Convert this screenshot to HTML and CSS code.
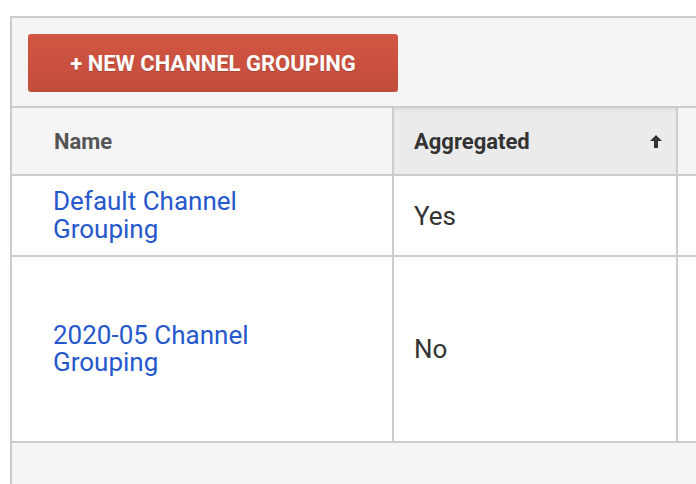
FILE: index.html
```html
<!DOCTYPE html>
<html>
<head>
<meta charset="utf-8">
<link rel="stylesheet" href="styles.css">
</head>
<body>
<div class="panel">
  <div class="toolbar">
    <button class="new-btn">+ NEW CHANNEL GROUPING</button>
  </div>
  <div class="table">
    <div class="row head">
      <div class="cell c-name">Name</div>
      <div class="cell c-agg sorted">
        <span>Aggregated</span>
        <svg class="sort-arrow" width="12" height="13" viewBox="0 0 12 13"><path d="M6 0 L12 6 L8 6 L8 13 L4 13 L4 6 L0 6 Z" fill="#333"/></svg>
      </div>
      <div class="cell c-rest"></div>
    </div>
    <div class="row r1">
      <div class="cell c-name"><a class="link" href="#">Default Channel<br>Grouping</a></div>
      <div class="cell c-agg">Yes</div>
      <div class="cell c-rest"></div>
    </div>
    <div class="row r2">
      <div class="cell c-name"><a class="link" href="#">2020-05 Channel<br>Grouping</a></div>
      <div class="cell c-agg">No</div>
      <div class="cell c-rest"></div>
    </div>
  </div>
  <div class="footer"></div>
</div>
</body>
</html>
```
FILE: styles.css
```css
html, body {
  margin: 0;
  padding: 0;
  background: #ffffff;
  overflow: hidden;
}
body {
  width: 696px;
  height: 484px;
  font-family: Roboto, "Liberation Sans", sans-serif;
}
.panel {
  margin: 16px 0 0 10px;
  border-left: 2px solid #cccccc;
  border-top: 2px solid #cccccc;
  background: #f5f5f5;
  height: 466px;
}
.toolbar {
  padding: 16px 0 14px 16px;
}
.new-btn {
  display: block;
  width: 370px;
  height: 58px;
  border: 0;
  border-radius: 3px;
  background: linear-gradient(#d35743, #c24c3b);
  color: #ffffff;
  font-family: Roboto, "Liberation Sans", sans-serif;
  font-weight: 700;
  font-size: 22px;
  text-shadow: 0 1px 1px rgba(0, 0, 0, 0.18);
  padding: 0;
  cursor: pointer;
}
.table {
  border-top: 2px solid #cccccc;
}
.row {
  display: flex;
  border-bottom: 2px solid #cccccc;
}
.row.head { height: 66px; }
.row.r1 { height: 79px; background: #ffffff; }
.row.r2 { height: 184px; background: #ffffff; }
.cell {
  display: flex;
  align-items: center;
  box-sizing: border-box;
  flex: none;
}
.c-name {
  width: 382px;
  border-right: 2px solid #cccccc;
  padding-left: 41px;
}
.c-agg {
  width: 284px;
  border-right: 2px solid #cccccc;
  padding-left: 20px;
  padding-right: 14px;
  font-size: 26px;
  color: #333333;
}
.c-rest {
  flex: 1 1 auto;
}
.head .cell {
  font-size: 22px;
  font-weight: 700;
  color: #555555;
}
.head .c-name {
  padding-left: 42px;
}
.head .c-agg {
  color: #333333;
  justify-content: space-between;
  background: #ebebeb;
  box-shadow: inset 0 3px 3px -1px rgba(0, 0, 0, 0.06);
}
.sort-arrow {
  display: block;
  margin-top: 1px;
}
.link {
  font-size: 26px;
  line-height: 27.5px;
  color: #2558cd;
  text-decoration: none;
}
.footer {
  height: 40px;
}
```
